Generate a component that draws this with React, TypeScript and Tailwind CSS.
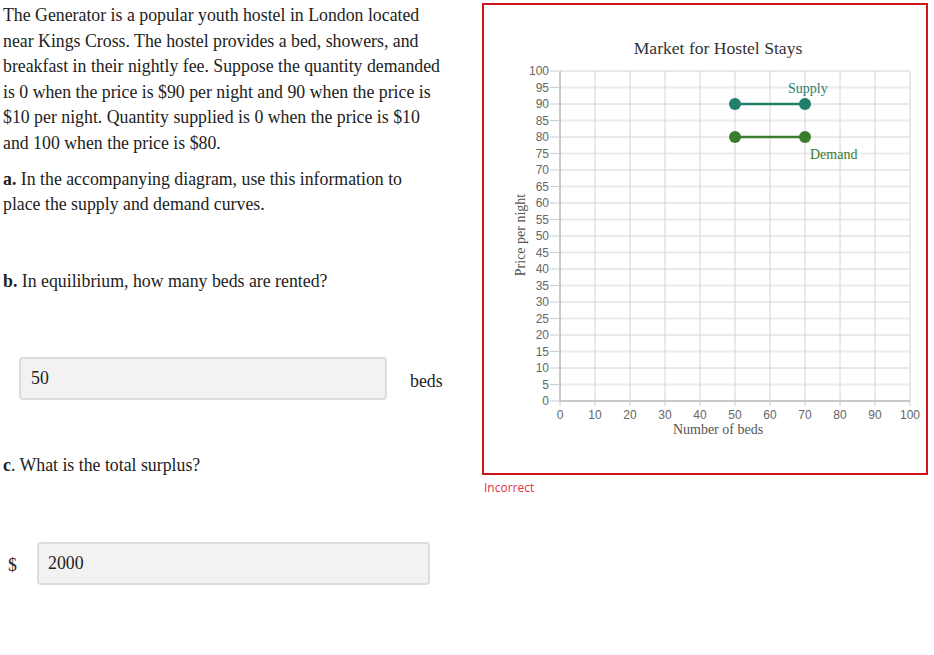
import React from 'react';

const X0 = 560;
const Y0 = 401;
const SX = 3.5;
const SY = 3.3;

const px = (q: number) => X0 + q * SX;
const py = (p: number) => Y0 - p * SY;

function MarketChart() {
  const yTicks = Array.from({ length: 21 }, (_, i) => i * 5);
  const xTicks = Array.from({ length: 11 }, (_, i) => i * 10);

  return (
    <svg width={442} height={468} className="block" style={{ fontFamily: '"Liberation Serif", serif' }}>
      <g transform="translate(-484,-5)">
        <text x={718} y={54} textAnchor="middle" fontSize={17.6} fill="#333">
          Market for Hostel Stays
        </text>

        {/* horizontal grid */}
        {yTicks.map((v) =>
          v % 10 === 0 ? (
            <line key={v} x1={X0} x2={px(100)} y1={py(v)} y2={py(v)} stroke="#d4d4d4" strokeWidth={1} />
          ) : (
            <line key={v} x1={X0} x2={px(100)} y1={py(v)} y2={py(v)} stroke="#ebebeb" strokeWidth={2} />
          )
        )}
        {/* vertical grid */}
        {xTicks.map((v) => (
          <line key={v} x1={px(v)} x2={px(v)} y1={py(100)} y2={Y0} stroke="#d4d4d4" strokeWidth={1} />
        ))}

        {/* axes */}
        <line x1={X0} x2={X0} y1={py(100)} y2={Y0} stroke="#aaa" />
        <line x1={X0} x2={px(100)} y1={Y0} y2={Y0} stroke="#aaa" />

        {yTicks.map((v) => (
          <g key={v}>
            <line x1={550} x2={X0} y1={py(v)} y2={py(v)} stroke="#ccc" />
            <text
              x={549}
              y={py(v) + 4}
              textAnchor="end"
              fontSize={12}
              fill="#666"
              style={{ fontFamily: '"Liberation Sans", Arial, sans-serif' }}
            >
              {v}
            </text>
          </g>
        ))}
        {xTicks.map((v) => (
          <g key={v}>
            <line x1={px(v)} x2={px(v)} y1={Y0} y2={Y0 + 5} stroke="#ccc" />
            <text
              x={px(v)}
              y={419}
              textAnchor="middle"
              fontSize={12}
              fill="#666"
              style={{ fontFamily: '"Liberation Sans", Arial, sans-serif' }}
            >
              {v}
            </text>
          </g>
        ))}

        <text x={718} y={434} textAnchor="middle" fontSize={14} fill="#555">
          Number of beds
        </text>
        <text x={0} y={0} textAnchor="middle" fontSize={14} fill="#555" transform="translate(525,235) rotate(-90)">
          Price per night
        </text>

        {/* supply */}
        <line x1={px(50)} x2={px(70)} y1={py(90)} y2={py(90)} stroke="#1f7f68" strokeWidth={2.5} />
        <circle cx={px(50)} cy={py(90)} r={6} fill="#1f7f68" />
        <circle cx={px(70)} cy={py(90)} r={6} fill="#1f7f68" />
        <text x={788} y={93} fontSize={14} fill="#2a8270">
          Supply
        </text>

        {/* demand */}
        <line x1={px(50)} x2={px(70)} y1={py(80)} y2={py(80)} stroke="#3a7d2c" strokeWidth={2.5} />
        <circle cx={px(50)} cy={py(80)} r={6} fill="#3a7d2c" />
        <circle cx={px(70)} cy={py(80)} r={6} fill="#3a7d2c" />
        <text x={810} y={159} fontSize={14} fill="#3f7a2a">
          Demand
        </text>
      </g>
    </svg>
  );
}

export default function App() {
  return (
    <div className="flex w-[934px] h-[655px] bg-white text-[#222]" style={{ fontFamily: '"Liberation Serif", "Times New Roman", serif' }}>
      <div className="w-[478px] shrink-0 pl-[3px] pt-[3px] pr-[33px] text-[17.8px] leading-[25.6px]">
        <p>
          The Generator is a popular youth hostel in London located near Kings Cross. The hostel provides a bed, showers, and
          breakfast in their nightly fee. Suppose the quantity demanded is 0 when the price is $90 per night and 90 when the price
          is $10 per night. Quantity supplied is 0 when the price is $10 and 100 when the price is $80.
        </p>
        <p className="mt-[10px] pr-[10px]">
          <b>a.</b> In the accompanying diagram, use this information to place the supply and demand curves.
        </p>
        <p className="mt-[51px]">
          <b>b.</b> In equilibrium, how many beds are rented?
        </p>

        <div className="mt-[63px] ml-[16px] flex items-center">
          <div className="w-[368px] h-[43px] rounded-[4px] border-2 border-[#dddddd] bg-[#f2f2f2] pl-[10px] flex items-center">
            50
          </div>
          <span className="ml-[23px] mt-[5px]">beds</span>
        </div>

        <p className="mt-[53px]">
          <b>c</b>. What is the total surplus?
        </p>

        <div className="mt-[63px] flex items-center">
          <span className="ml-[5px] w-[29px] mt-[4px]">$</span>
          <div className="w-[393px] h-[43px] rounded-[4px] border-2 border-[#dddddd] bg-[#f2f2f2] pl-[9px] flex items-center">
            2000
          </div>
        </div>
      </div>

      <div className="pt-[3px] pl-[4px]">
        <div className="w-[446px] h-[472px] border-2 border-[#d0121b]">
          <MarketChart />
        </div>
        <div className="mt-[4px] pl-[2px] text-[12px] text-[#e0323f]" style={{ fontFamily: '"Open Sans", "Liberation Sans", sans-serif' }}>
          Incorrect
        </div>
      </div>
    </div>
  );
}
